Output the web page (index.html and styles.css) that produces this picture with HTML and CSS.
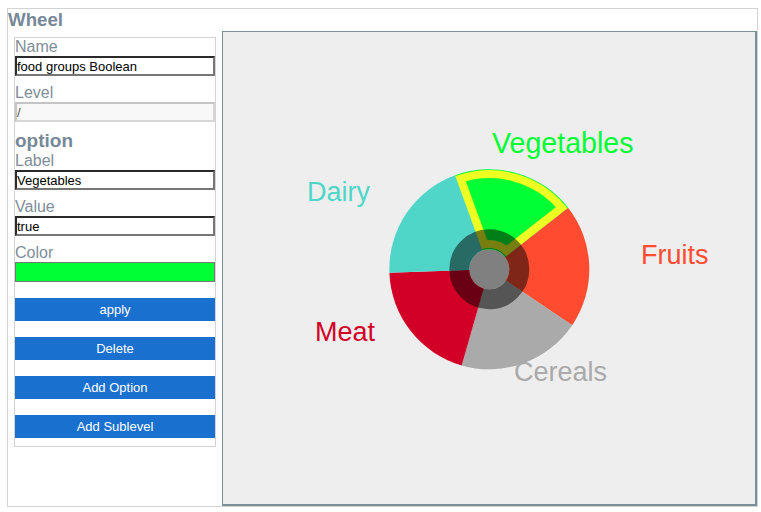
FILE: index.html
```html
<!DOCTYPE html>
<html>
<head>
<meta charset="utf-8">
<title>Wheel</title>
<link rel="stylesheet" href="styles.css">
</head>
<body>
<div class="app">
  <h1 class="title">Wheel</h1>
  <div class="main">
    <div class="panel">
      <div class="label">Name</div>
      <input class="field" type="text" value="food groups Boolean">
      <div class="label">Level</div>
      <input class="field field-disabled" type="text" value="/" disabled>
      <div class="section">option</div>
      <div class="label">Label</div>
      <input class="field" type="text" value="Vegetables">
      <div class="label">Value</div>
      <input class="field" type="text" value="true">
      <div class="label">Color</div>
      <div class="swatch"></div>
      <button class="btn">apply</button>
      <button class="btn">Delete</button>
      <button class="btn">Add Option</button>
      <button class="btn btn-last">Add Sublevel</button>
    </div>
    <div class="canvas">
      <svg class="wheel" width="532" height="472" viewBox="223 32 532 472" xmlns="http://www.w3.org/2000/svg">
        <path d="M489.3 269.3 L455.1 175.3 A100 100 0 0 1 568.1 207.7 Z" fill="#00ff33"/>
        <path d="M489.3 269.3 L568.1 207.7 A100 100 0 0 1 572.2 325.2 Z" fill="#ff4c30"/>
        <path d="M489.3 269.3 L572.2 325.2 A100 100 0 0 1 461.7 365.4 Z" fill="#aaaaaa"/>
        <path d="M489.3 269.3 L461.7 365.4 A100 100 0 0 1 389.4 272.8 Z" fill="#d20026"/>
        <path d="M489.3 269.3 L389.4 272.8 A100 100 0 0 1 455.1 175.3 Z" fill="#50d6c8"/>
        <path d="M460.6 178.6 A95 95 0 0 1 561.7 207.6 L506.5 250.8 A25.3 25.3 0 0 0 484.5 244.4 Z" fill="none" stroke="#eeff22" stroke-width="8" stroke-linejoin="miter"/>
        <circle cx="489.3" cy="269.3" r="30" fill="none" stroke="#000" stroke-opacity="0.5" stroke-width="20"/>
        <circle cx="489.3" cy="269.3" r="20" fill="#808080"/>
        <text class="seg-label seg-label-selected" x="492" y="153.3" fill="#00ff33">Vegetables</text>
        <text class="seg-label" x="307" y="201" fill="#50d6c8">Dairy</text>
        <text class="seg-label" x="641" y="264.3" fill="#ff4c30">Fruits</text>
        <text class="seg-label" x="315" y="341" fill="#d20026">Meat</text>
        <text class="seg-label" x="514" y="381" fill="#aaaaaa">Cereals</text>
      </svg>
    </div>
  </div>
</div>
</body>
</html>
```
FILE: styles.css
```css
html, body {
  margin: 0;
  padding: 0;
  background: #ffffff;
}

body {
  font-family: "Liberation Sans", Arial, sans-serif;
}

.app {
  margin: 8px 0 0 7px;
  width: 749px;
  height: 497px;
  border: 1px solid #d3d3d3;
}

.title {
  margin: 0;
  height: 22px;
  font-size: 18.7px;
  line-height: 22px;
  font-weight: bold;
  color: #778899;
}

.main {
  display: flex;
  align-items: flex-start;
}

.panel {
  display: flex;
  flex-direction: column;
  box-sizing: border-box;
  width: 202px;
  margin: 6px 0 0 6px;
  padding-bottom: 8px;
  border: 1px solid #d3d3d3;
}

.label {
  font-size: 16px;
  line-height: 18px;
  color: #808d99;
}

.section {
  font-size: 19px;
  line-height: 22px;
  font-weight: bold;
  color: #778899;
}

.field {
  display: block;
  box-sizing: border-box;
  width: 200px;
  height: 20px;
  margin: 0 0 8px 0;
  padding: 0;
  font-family: "Liberation Sans", Arial, sans-serif;
  font-size: 13px;
  color: #000000;
  background: #ffffff;
  border-style: solid;
  border-width: 2px;
  border-color: #2a2a2a #767676 #767676 #2a2a2a;
  outline: none;
}

.field-disabled {
  background: #f8f8f8;
  border-color: #c4c4c4 #d6d6d6 #d6d6d6 #c4c4c4;
  color: #545454;
}

.swatch {
  box-sizing: border-box;
  width: 200px;
  height: 20px;
  margin-bottom: 16px;
  background: #00ff33;
  border: 1px solid #777777;
}

.btn {
  display: block;
  width: 200px;
  height: 23px;
  margin: 0 0 16px 0;
  padding: 0;
  border: none;
  background: #1a70cf;
  color: #ffffff;
  font-family: "Liberation Sans", Arial, sans-serif;
  font-size: 13px;
  text-align: center;
}

.btn-last {
  margin-bottom: 0;
}

.canvas {
  box-sizing: border-box;
  width: 535px;
  height: 475px;
  margin-left: 6px;
  background: #eeeeee;
  border-style: solid;
  border-color: #7a9099;
  border-width: 1px 2px 2px 1px;
}

.wheel {
  display: block;
}

.seg-label {
  font-family: "Liberation Sans", Arial, sans-serif;
  font-size: 27px;
}

.seg-label-selected {
  font-size: 28.6px;
}
```
